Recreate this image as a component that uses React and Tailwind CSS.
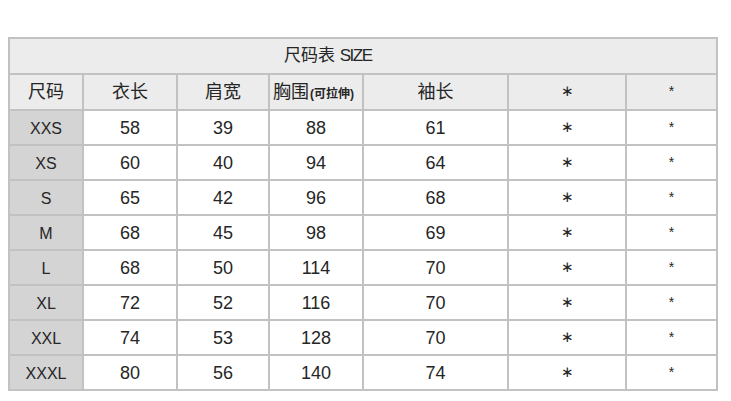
import React from "react";

const ROWS = [
  ["XXS", 58, 39, 88, 61],
  ["XS", 60, 40, 94, 64],
  ["S", 65, 42, 96, 68],
  ["M", 68, 45, 98, 69],
  ["L", 68, 50, 114, 70],
  ["XL", 72, 52, 116, 70],
  ["XXL", 74, 53, 128, 70],
  ["XXXL", 80, 56, 140, 74],
];

const font = {
  fontFamily: '"Liberation Sans", "Noto Sans CJK SC", sans-serif',
};

const cell = "border-2 border-[#c2c2c2] text-center p-0 text-[#262626]";

// 星号列：第一列偏大，第二列偏小偏上
const StarA = () => <span className="inline-block text-[15px] -translate-y-[1px]">∗</span>;
const StarB = () => <span className="inline-block text-[14px] -translate-y-[1px]">*</span>;

export default function App() {
  return (
    <div className="w-[731px] h-[401px] bg-white pt-[37px] pl-[8px]" style={font}>
      <table className="border-collapse table-fixed w-[708px]">
        <colgroup>
          <col className="w-[74px]" />
          <col className="w-[94px]" />
          <col className="w-[92px]" />
          <col className="w-[94px]" />
          <col className="w-[145px]" />
          <col className="w-[118px]" />
          <col className="w-[91px]" />
        </colgroup>
        <thead>
          <tr className="h-[36px] bg-[#ececec]">
            <th colSpan={7} className={`${cell} font-normal text-[17px] text-left pl-[274px]`}>
              尺码表 <span className="tracking-[-1.5px]">SIZE</span>
            </th>
          </tr>
          <tr className="h-[36px] bg-[#ececec]">
            <th className={`${cell} font-normal text-[18px]`}>尺码</th>
            <th className={`${cell} font-normal text-[18px]`}>衣长</th>
            <th className={`${cell} font-normal text-[18px]`}>肩宽</th>
            <th className={`${cell} font-normal text-[18px] text-left pl-[3px] whitespace-nowrap`}>
              胸围<span className="text-[12px] font-bold ml-[1px]">(可拉伸)</span>
            </th>
            <th className={`${cell} font-normal text-[18px]`}>袖长</th>
            <th className={`${cell} font-normal`}><StarA /></th>
            <th className={`${cell} font-normal`}><StarB /></th>
          </tr>
        </thead>
        <tbody>
          {ROWS.map((r) => (
            <tr key={r[0]} className="h-[35px]">
              <td className={`${cell} bg-[#d4d4d4] text-[16px] pt-[2px]`}>{r[0]}</td>
              <td className={`${cell} text-[18px] pt-[2px]`}>{r[1]}</td>
              <td className={`${cell} text-[18px] pt-[2px]`}>{r[2]}</td>
              <td className={`${cell} text-[18px] pt-[2px]`}>{r[3]}</td>
              <td className={`${cell} text-[18px] pt-[2px]`}>{r[4]}</td>
              <td className={cell}><StarA /></td>
              <td className={cell}><StarB /></td>
            </tr>
          ))}
        </tbody>
      </table>
    </div>
  );
}
